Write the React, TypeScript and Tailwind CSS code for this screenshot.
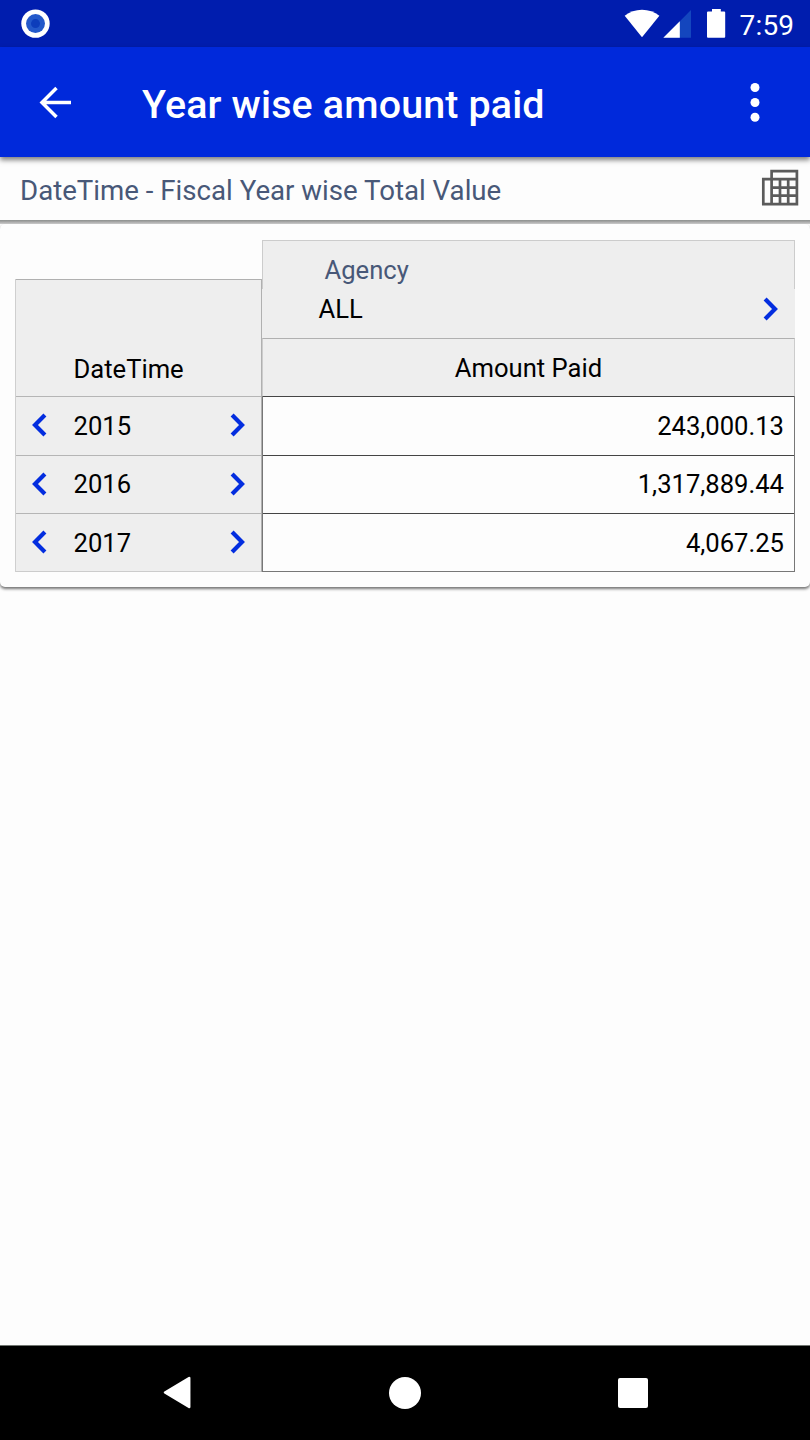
const rows = [
  { year: "2015", amount: "243,000.13" },
  { year: "2016", amount: "1,317,889.44" },
  { year: "2017", amount: "4,067.25" },
];

function Chevron({ left = false }: { left?: boolean }) {
  return (
    <svg width="16" height="24" viewBox="0 0 16 24" className="block shrink-0" fill="none" stroke="#032ddf" strokeWidth="4.2">
      <path d={left ? "M13.9 2 4 12l9.900 10" : "M2.100 2 12 12l-9.900 10"} />
    </svg>
  );
}

function StatusBar() {
  return (
    <div className="flex h-[47px] items-start bg-[#001dae] text-white">
      <svg width="30" height="30" viewBox="0 0 30 30" className="mt-[8px] ml-[20px]">
        <circle cx="15.5" cy="15.6" r="14.2" fill="#fff" />
        <circle cx="15.5" cy="15.6" r="9.5" fill="#2459ca" />
        <circle cx="15.5" cy="15.6" r="4.5" fill="#0d3dbb" />
      </svg>
      <svg width="106" height="30" viewBox="0 0 106 30" className="mt-[8px] ml-[572px]">
        <path d="M2.7 7.8C12-.2 28-.2 37.4 7.8L20 29.2Z" fill="#fff" />
        <path d="M69 2V29.7H41.5Z" fill="#1446be" />
        <path d="M57.8 13.3V29.7H41.3Z" fill="#fff" />
        <path d="M90 1h8.8v2.5h3.4q1 0 1 1v24.2q0 1-1 1H86q-1 0-1-1V4.500q0-1 1-1h4Z" fill="#fff" />
      </svg>
      <span className="mt-[10px] ml-[11.5px] text-[28px] leading-[32px] tracking-[0.2px]">7:59</span>
    </div>
  );
}

export default function App() {
  return (
    <div className="flex h-[1440px] w-[810px] flex-col overflow-hidden bg-[#fdfdfd] font-['Roboto',sans-serif] text-black">
      <StatusBar />
      <header className="z-10 flex h-[110px] shrink-0 items-start bg-[#0029db] text-white shadow-[0_3px_5px_rgba(0,0,0,0.5)]">
        <svg width="34" height="34" viewBox="0 0 34 34" className="mt-[38px] ml-[38px]" fill="none" stroke="#fff" strokeWidth="3.5">
          <path d="M33 17.500H5M18.500 3 4 17.500 18.500 32" />
        </svg>
        <h1 className="mt-[35px] ml-[70px] text-[39.4px] leading-[46px] font-medium tracking-[0.15px] whitespace-nowrap">Year wise amount paid</h1>
        <svg width="10" height="42" viewBox="0 0 10 42" className="mt-[35px] mr-[50px] ml-auto" fill="#fff">
          <circle cx="5" cy="5.500" r="4.500" />
          <circle cx="5" cy="20.500" r="4.500" />
          <circle cx="5" cy="35.300" r="4.500" />
        </svg>
      </header>
      <div className="flex h-[63px] shrink-0 items-start justify-between pr-[11px] pl-[20px]">
        <h2 className="mt-[16px] text-[27.65px] leading-[35px] whitespace-nowrap text-[#485878]">DateTime - Fiscal Year wise Total Value</h2>
        <svg width="38" height="38" viewBox="0 0 38 38" className="mt-[12px]" fill="none" stroke="#5b5b5b" strokeWidth="2.700">
          <path d="M10.600 2.200H35.900V35.200H2.300V10.200H10.600ZM10.600 10.200V35.200M10.600 10.200H35.900M10.600 18.600H35.900M10.600 26.600H35.900M19 10.200V35.200M27.200 10.200V35.200" />
        </svg>
      </div>
      <div className="h-[4px] shrink-0 bg-gradient-to-b from-[#8c908e] via-[#a9a9a9] to-[#d0d0d0]" />
      <main className="flex h-[363px] shrink-0 items-end rounded-[5px] bg-[#fdfdfd] px-[15px] pb-[15px] shadow-[0_2px_3px_rgba(0,0,0,0.55)]">
        <div className="w-[247px] border-r border-l border-r-[#b0b0b0] border-l-[#cfcfcf] bg-[#eeeeee]">
          <div className="h-[117px] border-t border-[#b0b0b0] pt-[74px] pl-[57.5px] text-[25.6px] leading-[31px]">DateTime</div>
          {rows.map(({ year }) => (
            <div key={year} className="flex h-[58.5px] items-start border-t border-[#b5b5b5] pt-[16px] pl-[15px] last:h-[59px] last:border-b last:border-b-[#cccccc]">
              <Chevron left />
              <span className="-mt-[2.5px] ml-[26.500px] text-[25.6px] leading-[31px]">{year}</span>
              <span className="mr-[15.5px] ml-auto"><Chevron /></span>
            </div>
          ))}
        </div>
        <div className="w-[533px]">
          <section className="h-[98px] bg-[#eeeeee] text-[25.6px] leading-[31px]">
            <div className="h-[49px] border-x border-t border-[#cccccc] pt-[14px] pl-[61.5px] text-[#485878]">Agency</div>
            <div className="flex h-[49px] items-start justify-between pt-[5px] pr-[16px] pl-[56.5px]">
              <span>ALL</span>
              <span className="mt-[3px]"><Chevron /></span>
            </div>
          </section>
          <div className="h-[58px] border-x border-t border-x-[#cccccc] border-t-[#b0b0b0] bg-[#eeeeee] pt-[14px] text-center text-[25.6px] leading-[31px]">Amount Paid</div>
          <div className="border-x border-x-[#777777]">
            {rows.map(({ year, amount }) => (
              <div key={year} className="flex h-[58.5px] items-start justify-end border-t border-[#454545] pt-[13.5px] pr-[10px] last:h-[59px] last:border-b last:border-b-[#777777]">
                <span className="text-[25.6px] leading-[31px]">{amount}</span>
              </div>
            ))}
          </div>
        </div>
      </main>
      <nav className="mt-auto flex h-[95px] shrink-0 items-center border-t border-[#707570] bg-black">
        <svg width="30" height="36" viewBox="0 0 30 36" className="ml-[162px]">
          <path d="M3 17.500 27.200 3V32Z" fill="#fff" stroke="#fff" strokeWidth="2.500" strokeLinejoin="round" />
        </svg>
        <div className="ml-[197px] size-[32px] rounded-full bg-white" />
        <div className="ml-[197px] size-[30px] rounded-[2px] bg-white" />
      </nav>
    </div>
  );
}
